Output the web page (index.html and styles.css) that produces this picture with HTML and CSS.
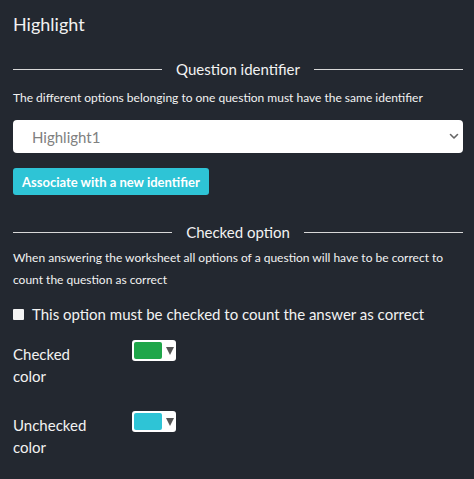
FILE: index.html
```html
<!DOCTYPE html>
<html>
<head>
<meta charset="utf-8">
<link rel="stylesheet" href="styles.css">
</head>
<body>
<div class="panel">
  <h1 class="title">Highlight</h1>
  <div class="divider divider-q"><span class="line"></span><span class="divider-text">Question identifier</span><span class="line"></span></div>
  <p class="help">The different options belonging to one question must have the same identifier</p>
  <div class="select">
    <span class="select-value">Highlight1</span>
    <svg class="chev" width="10" height="7" viewBox="0 0 10 7"><path d="M1.5 1.5 L5 5 L8.5 1.5" fill="none" stroke="#666" stroke-width="1.6" stroke-linecap="round" stroke-linejoin="round"/></svg>
  </div>
  <button class="btn">Associate with a new identifier</button>
  <div class="divider divider-c"><span class="line"></span><span class="divider-text">Checked option</span><span class="line"></span></div>
  <p class="help help-2">When answering the worksheet all options of a question will have to be correct to count the question as correct</p>
  <label class="check"><span class="box"></span><span>This option must be checked to count the answer as correct</span></label>
  <div class="color-row">
    <div class="color-label">Checked<br>color</div>
    <div class="picker"><span class="swatch green"></span><span class="arrow"></span></div>
  </div>
  <div class="color-row">
    <div class="color-label">Unchecked<br>color</div>
    <div class="picker"><span class="swatch cyan"></span><span class="arrow"></span></div>
  </div>
</div>
</body>
</html>
```
FILE: styles.css
```css
html, body {
  margin: 0;
  padding: 0;
  background: #232830;
}
body {
  font-family: Lato, "Noto Sans", sans-serif;
  color: #f2f2f2;
}
.panel {
  padding: 11px 11px 0 13px;
}
.title {
  margin: 0;
  font-size: 18px;
  font-weight: 400;
  line-height: 26px;
}
.divider {
  display: flex;
  align-items: center;
  gap: 14px;
  font-size: 15px;
  line-height: 20px;
}
.divider-q { margin-top: 22px; }
.divider-c { margin-top: 27px; }
.line {
  flex: 1;
  height: 1px;
  background: #d8d8d8;
}
.help {
  margin: 8px 0 0;
  font-size: 12px;
  line-height: 22px;
}
.select {
  margin-top: 11px;
  height: 33px;
  box-sizing: border-box;
  background: #fff;
  border-radius: 4px;
  display: flex;
  align-items: center;
  justify-content: space-between;
  padding: 0 4px 0 19px;
}
.select-value {
  color: #808080;
  font-size: 15px;
}
.btn {
  display: block;
  margin-top: 15px;
  height: 27px;
  padding: 0 9px;
  border: 0;
  border-radius: 3px;
  background: #2ec4d6;
  color: #fff;
  font-family: inherit;
  font-weight: 700;
  font-size: 13px;
}
.help-2 { margin-top: 5px; }
.check {
  display: flex;
  align-items: center;
  gap: 8px;
  margin-top: 12px;
  font-size: 15px;
  line-height: 22px;
}
.box {
  width: 11px;
  height: 11px;
  background: #f4f4f4;
  border-radius: 1px;
}
.color-row {
  display: flex;
  align-items: flex-start;
  margin-top: 15px;
}
.color-row + .color-row { margin-top: 24px; }
.color-label {
  width: 119px;
  padding-top: 3px;
  font-size: 15px;
  line-height: 22px;
}
.picker {
  width: 44px;
  height: 21px;
  box-sizing: border-box;
  background: #fff;
  border-radius: 3px;
  display: flex;
  align-items: center;
  padding: 2px;
}
.swatch {
  width: 28px;
  height: 17px;
  border-radius: 2px;
}
.green { background: #1fa64a; }
.cyan { background: #2ec4d6; }
.arrow {
  margin-left: 4px;
  width: 0;
  height: 0;
  border-left: 4px solid transparent;
  border-right: 4px solid transparent;
  border-top: 8px solid #555;
}
```
